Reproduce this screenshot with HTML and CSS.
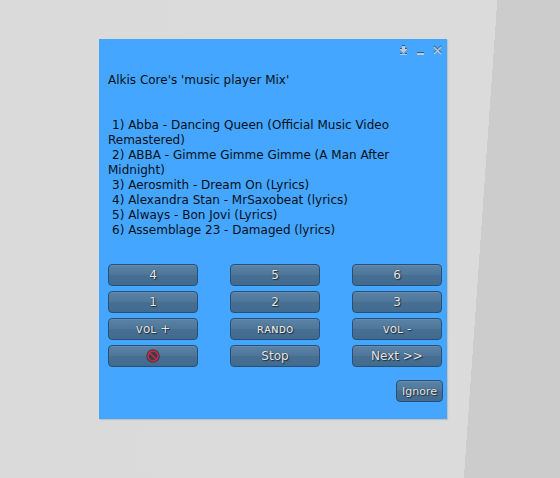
FILE: index.html
```html
<!DOCTYPE html>
<html lang="en">
  <head>
    <meta charset="UTF-8" />
    <meta name="viewport" content="width=device-width, initial-scale=1.0" />
    <title>Music player</title>
    <link rel="stylesheet" href="styles.css">
  </head>
  <body>
    <main class="dialog">
      <div class="window-controls">
        <button type="button" aria-label="Dock">
          <svg width="9" height="11" viewBox="0 0 9 11" shape-rendering="crispEdges">
            <path class="shade" d="M3 0h3v1H3zM1 3h2v1H1zM6 3h2v1H6zM1 8h2v1H1zM6 8h2v1H6z" />
            <path class="light" d="M3 1h3v3h2v1H7v1H6v1H5v1H4V7H3V6H2V5H1V4h2zM1 9h7v1H1z" />
          </svg>
        </button>
        <button type="button" aria-label="Minimize">
          <svg width="9" height="11" viewBox="0 0 9 11" shape-rendering="crispEdges">
            <path class="shade" d="M1 7h7v1H1z" />
            <path class="light" d="M1 8h7v2H1z" />
          </svg>
        </button>
        <button type="button" aria-label="Close">
          <svg width="9" height="11" viewBox="0 0 9 11">
            <path class="cross-shade" d="M1 1l7 7M8 1L1 8" />
            <path class="cross" d="M1 2l7 7M8 2L1 9" />
          </svg>
        </button>
      </div>
      <h1>Alkis Core's 'music player Mix'</h1>
      <ul class="songs">
        <li>1) Abba - Dancing Queen (Official Music Video Remastered)</li>
        <li>2) ABBA - Gimme Gimme Gimme (A Man After Midnight)</li>
        <li>3) Aerosmith - Dream On (Lyrics)</li>
        <li>4) Alexandra Stan - MrSaxobeat (lyrics)</li>
        <li>5) Always - Bon Jovi (Lyrics)</li>
        <li>6) Assemblage 23 - Damaged (lyrics)</li>
      </ul>
      <div class="buttons">
        <button type="button" class="btn">4</button>
        <button type="button" class="btn">5</button>
        <button type="button" class="btn">6</button>
        <button type="button" class="btn">1</button>
        <button type="button" class="btn">2</button>
        <button type="button" class="btn">3</button>
        <button type="button" class="btn">ᴠᴏʟ +</button>
        <button type="button" class="btn">ʀᴀɴᴅᴏ</button>
        <button type="button" class="btn">ᴠᴏʟ -</button>
        <button type="button" class="btn" aria-label="Mute">
          <svg class="ban" width="14" height="14" viewBox="0 0 14 14">
            <circle class="ban-back" cx="7" cy="7" r="6" />
            <circle cx="7" cy="7" r="5" />
            <path d="M3.5 3.5l7 7" />
          </svg>
        </button>
        <button type="button" class="btn">Stop</button>
        <button type="button" class="btn">Next &gt;&gt;</button>
      </div>
      <div class="footer">
        <button type="button" class="btn small">Ignore</button>
      </div>
    </main>
  </body>
</html>
```
FILE: styles.css
```css
* {
    box-sizing: border-box;
}

html {
    min-height: 100%;
    background: linear-gradient(94deg, #dadada, #dbdbdc 83.8%, #cccccc 83.8%);
}

body {
    margin: 0;
    padding: 39px 113px 59px 99px;
    font-family: "DejaVu Sans", sans-serif;
    font-size: 12px;
    line-height: 15px;
    color: #0a1017;
}

.dialog {
    background: #44a6ff;
    padding: 6px 4px 17px 9px;
    box-shadow: 1px 1px 1px rgba(0, 0, 0, 0.12);
}

.window-controls {
    display: flex;
    justify-content: flex-end;
    gap: 8px;
    padding-right: 1px;
}

.window-controls button {
    display: flex;
    padding: 0;
    border: 0;
    background: none;
}

.shade {
    fill: #2b5f93;
}

.light {
    fill: #c8c8c8;
}

.cross,
.cross-shade {
    fill: none;
    stroke: #c0c4c8;
    stroke-width: 1.5;
}

.cross-shade {
    stroke: #2b5f93;
}

h1 {
    margin: 0;
    padding-top: 17px;
    font-size: 12px;
    font-weight: normal;
}

.songs {
    list-style: none;
    margin: 30px 0 26px;
    padding: 0 10px 0 0;
    text-indent: 4px;
}

.buttons {
    display: grid;
    grid-template-columns: repeat(3, 1fr);
    gap: 5px 32px;
    padding-right: 1px;
}

.btn {
    display: flex;
    align-items: center;
    justify-content: center;
    height: 22px;
    padding: 0;
    border: 1px solid #25507b;
    border-radius: 4px;
    background: linear-gradient(#5c83a6, #4d7698 50%, #486f93 50%, #416b8e);
    box-shadow: inset 0 1px 0 rgba(255, 255, 255, 0.08);
    font-family: inherit;
    font-size: 12px;
    color: #e6e6e6;
    text-shadow: 1px 1px 1px #1c2e3e, 0 0 1px #1c2e3e;
}

.ban {
    fill: none;
    stroke: #e0203c;
    stroke-width: 1.5;
}

.ban-back {
    fill: #33404f;
    stroke: #33404f;
}

.footer {
    display: flex;
    justify-content: flex-end;
    margin-top: 13px;
}

.small {
    padding: 0 5px;
    font-size: 11px;
}
```
